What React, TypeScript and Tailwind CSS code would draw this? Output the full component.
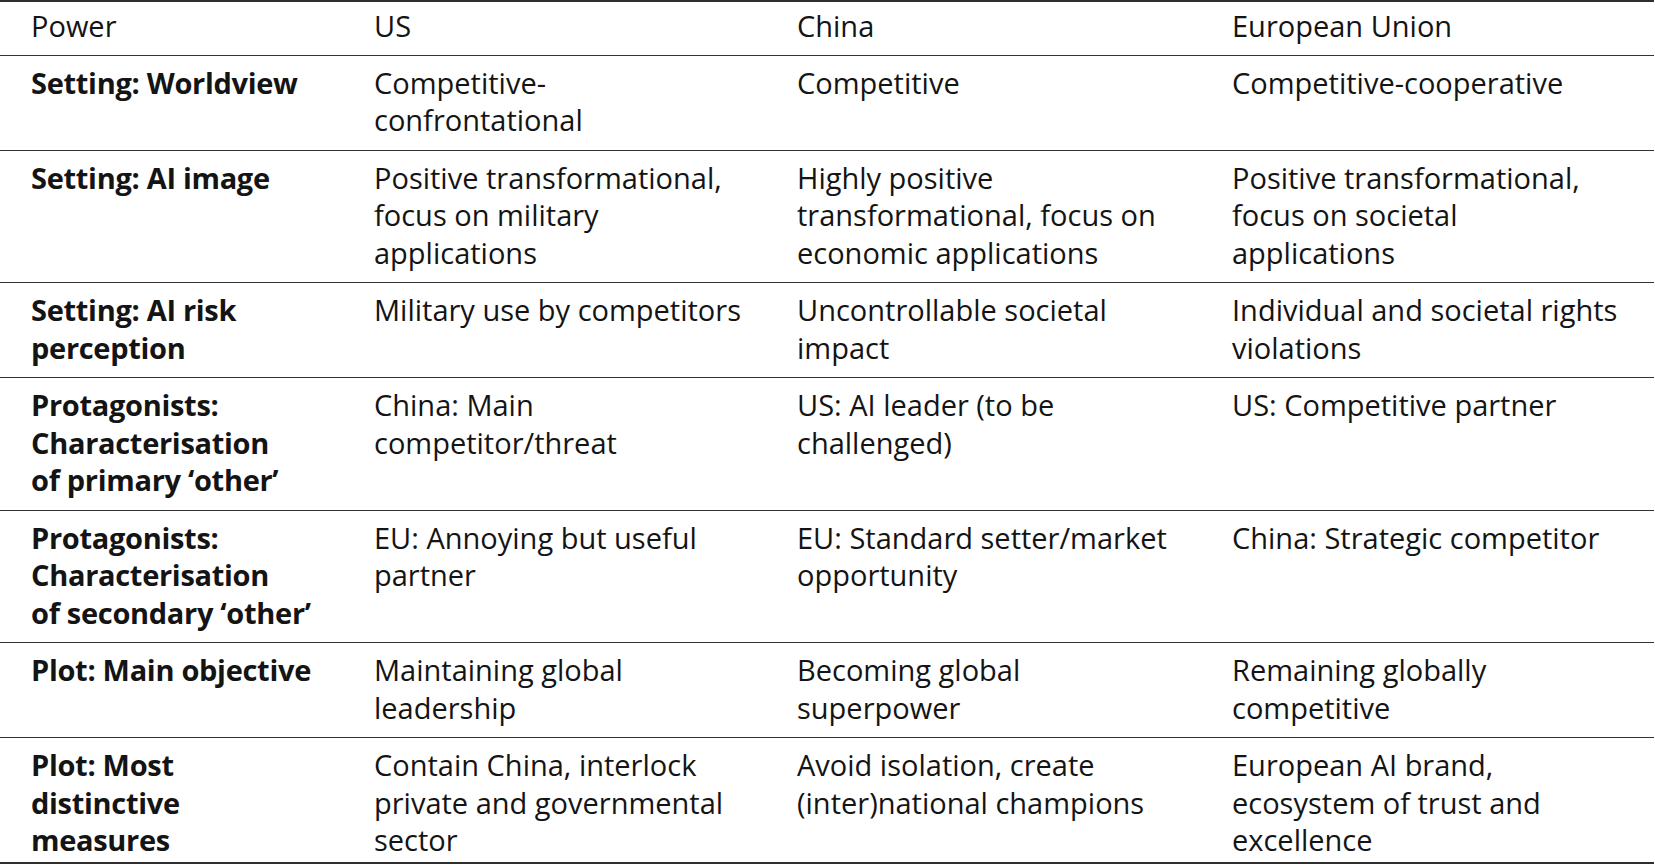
import React from 'react';

type Row = {
  label: string[];
  cells: string[][];
};

const rows: Row[] = [
  {
    label: ['Setting: Worldview'],
    cells: [['Competitive-', 'confrontational'], ['Competitive'], ['Competitive-cooperative']],
  },
  {
    label: ['Setting: AI image'],
    cells: [
      ['Positive transformational,', 'focus on military', 'applications'],
      ['Highly positive', 'transformational, focus on', 'economic applications'],
      ['Positive transformational,', 'focus on societal', 'applications'],
    ],
  },
  {
    label: ['Setting: AI risk', 'perception'],
    cells: [
      ['Military use by competitors'],
      ['Uncontrollable societal', 'impact'],
      ['Individual and societal rights', 'violations'],
    ],
  },
  {
    label: ['Protagonists:', 'Characterisation', 'of primary \u2018other\u2019'],
    cells: [
      ['China: Main', 'competitor/threat'],
      ['US: AI leader (to be', 'challenged)'],
      ['US: Competitive partner'],
    ],
  },
  {
    label: ['Protagonists:', 'Characterisation', 'of secondary \u2018other\u2019'],
    cells: [
      ['EU: Annoying but useful', 'partner'],
      ['EU: Standard setter/market', 'opportunity'],
      ['China: Strategic competitor'],
    ],
  },
  {
    label: ['Plot: Main objective'],
    cells: [
      ['Maintaining global', 'leadership'],
      ['Becoming global', 'superpower'],
      ['Remaining globally', 'competitive'],
    ],
  },
  {
    label: ['Plot: Most', 'distinctive', 'measures'],
    cells: [
      ['Contain China, interlock', 'private and governmental', 'sector'],
      ['Avoid isolation, create', '(inter)national champions'],
      ['European AI brand,', 'ecosystem of trust and', 'excellence'],
    ],
  },
];

const grid = 'grid grid-cols-[343px_423px_435px_1fr]';

const Lines = ({ lines }: { lines: string[] }) => (
  <div className="pl-[31px]">
    {lines.map((l, i) => (
      <div key={i} className="whitespace-nowrap">
        {l}
      </div>
    ))}
  </div>
);

export default function App() {
  return (
    <div
      className="w-[1655px] h-[866px] bg-white text-[#141414] text-[29px] leading-[37.5px] overflow-hidden"
      style={{ fontFamily: '"Open Sans", Lato, sans-serif' }}
    >
      <div className="w-[1654px] border-t-2 border-b-2 border-[#2e2e2e]">
        {/* Header */}
        <div className={`${grid} pt-[5px] pb-[10px] border-b border-[#333]`}>
          <Lines lines={['Power']} />
          <Lines lines={['US']} />
          <Lines lines={['China']} />
          <Lines lines={['European Union']} />
        </div>

        {rows.map((row, i) => (
          <div
            key={i}
            className={`${grid} ${
              i === rows.length - 1 ? 'pt-[8px] pb-[3px]' : 'pt-[8px] pb-[11px] border-b border-[#333]'
            }`}
          >
            <div className="font-bold tracking-[-0.3px]">
              <Lines lines={row.label} />
            </div>
            {row.cells.map((c, j) => (
              <Lines key={j} lines={c} />
            ))}
          </div>
        ))}
      </div>
    </div>
  );
}
